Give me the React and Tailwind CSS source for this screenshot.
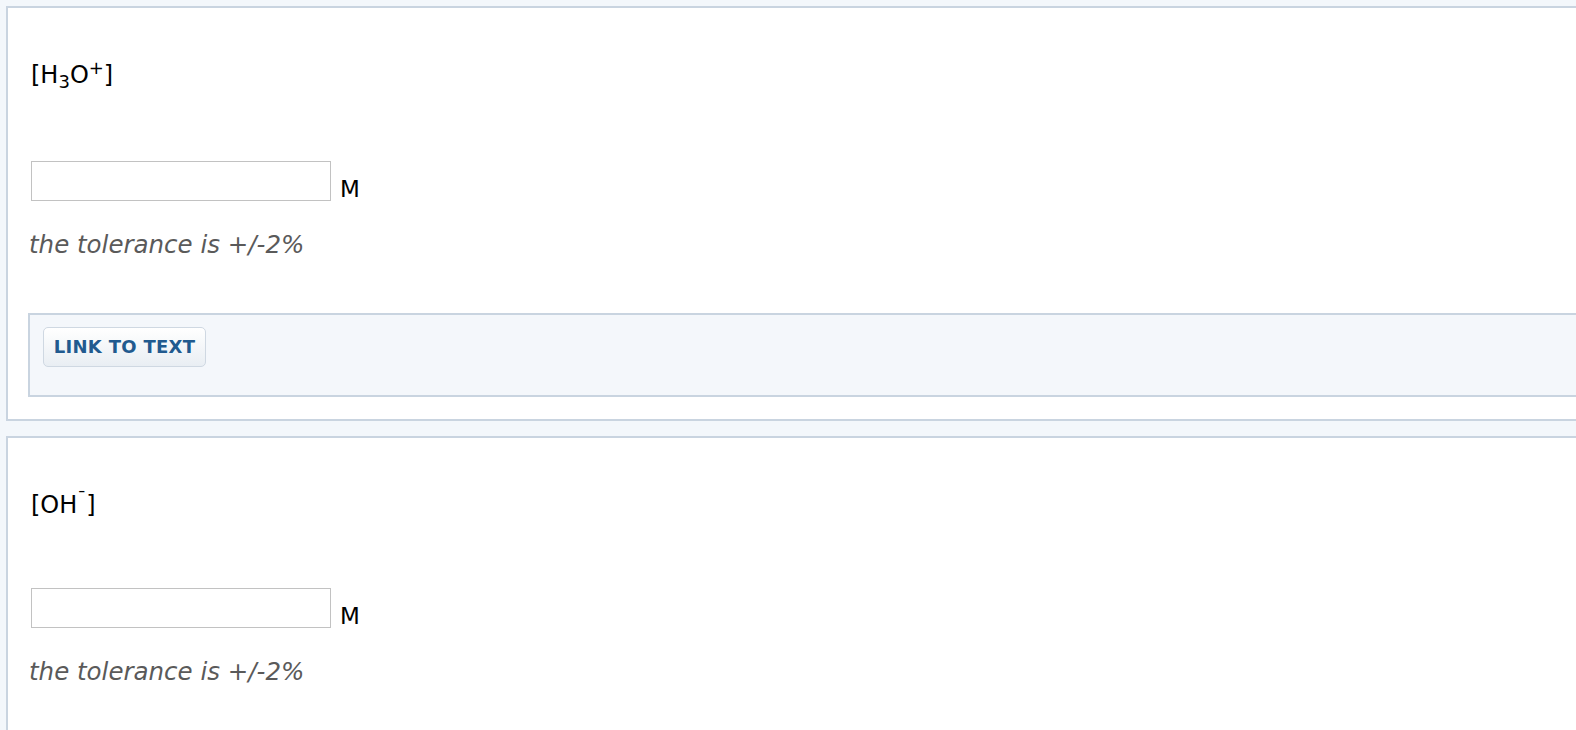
import React from 'react';

const font = { fontFamily: '"DejaVu Sans", Verdana, sans-serif' };

function Answer({ label, gap, children }) {
    return (
        <div className="pl-[23px]">
            <div className="h-[53px]" />
            <div className="text-[24px] leading-[28px] text-black">{label}</div>
            <div className={gap} />
            <div className="flex items-end gap-[9px]">
                <input type="text" className="w-[300px] h-[40px] border border-[#c2c2c2] bg-white outline-none" />
                <span className="text-[23px] leading-[28px] text-black translate-y-[2px]">M</span>
            </div>
            <div className="mt-[30px] text-[24.5px] leading-[28px] italic text-[#5a5a5a] -ml-[2px]">
                the tolerance is +/-2%
            </div>
            {children}
        </div>
    );
}

export default function App() {
    return (
        <div className="w-full h-[730px] overflow-hidden bg-[#f3f7fb]" style={font}>
            <div className="w-[1620px] pt-[6px] pl-[6px] flex flex-col gap-[15px]">
                <div className="bg-white border-2 border-[#c9d4e0] pb-[22px]">
                    <Answer
                        gap="h-[72px]"
                        label={<span>[H<sub>3</sub>O<sup>+</sup>]</span>}
                    >
                        <div className="mt-[54px] -ml-[3px] h-[84px] bg-[#f4f7fb] border-2 border-[#c9d4e0] pt-[12px] pl-[13px]">
                            <button className="w-[163px] h-[40px] rounded-[5px] border border-[#cfd8e2] bg-gradient-to-b from-white to-[#e9eef3] text-[18px] leading-[22px] font-bold text-[#215a8f] tracking-[0.3px]">
                                LINK TO TEXT
                            </button>
                        </div>
                    </Answer>
                </div>
                <div className="bg-white border-2 border-[#c9d4e0] h-[400px]">
                    <Answer
                        gap="h-[69px]"
                        label={<span>[OH<sup>ˉ</sup>]</span>}
                    />
                </div>
            </div>
        </div>
    );
}
